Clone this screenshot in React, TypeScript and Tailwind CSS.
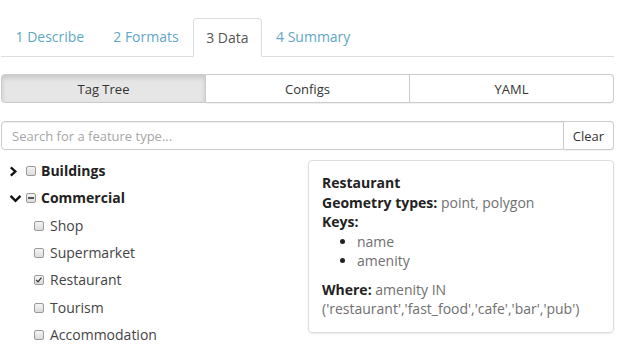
import React from "react";

function Check({ state }: { state: "off" | "on" | "mixed" }) {
  return (
    <span className="relative inline-flex w-[10px] h-[10px] shrink-0 rounded-[2px] border border-[#9a9a9a] bg-gradient-to-b from-[#f4f4f4] to-[#dcdcdc]">
      {state === "on" && (
        <svg viewBox="0 0 10 10" className="absolute left-[0px] top-[0px] w-[8px] h-[8px]">
          <path d="M1.5 5 L3.8 7.3 L8 2" fill="none" stroke="#333" strokeWidth="1.6" />
        </svg>
      )}
      {state === "mixed" && (
        <span className="absolute left-[1px] right-[1px] top-[3px] h-[2px] bg-[#555]" />
      )}
    </span>
  );
}

function ChevronRight() {
  return (
    <svg viewBox="0 0 10 12" className="w-[9px] h-[11px]">
      <path d="M2 1.5 L7 6 L2 10.5" fill="none" stroke="#111" strokeWidth="2.6" />
    </svg>
  );
}

function ChevronDown() {
  return (
    <svg viewBox="0 0 14 10" className="w-[13px] h-[9px]">
      <path d="M1.5 2 L7 7.5 L12.5 2" fill="none" stroke="#111" strokeWidth="2.6" />
    </svg>
  );
}

export default function App() {
  const font = { fontFamily: '"Open Sans", "Liberation Sans", sans-serif' };
  const tabs = ["1 Describe", "2 Formats", "3 Data", "4 Summary"];
  const children: [string, "off" | "on"][] = [
    ["Shop", "off"],
    ["Supermarket", "off"],
    ["Restaurant", "on"],
    ["Tourism", "off"],
    ["Accommodation", "off"],
  ];
  return (
    <div className="w-[624px] h-[354px] bg-white text-[#333] text-[14px] leading-[20px] overflow-hidden" style={font}>
      <div className="w-[613px] ml-[1px] pt-[18px]">
        {/* Tabs */}
        <div className="flex border-b border-[#ddd] h-[39px]">
          {tabs.map((t, i) => (
            <div
              key={t}
              className={
                i === 2
                  ? "h-[39px] -mb-[1px] px-[12px] flex items-center rounded-t-[4px] border border-[#ddd] border-b-white bg-white text-[#555] text-[14px]"
                  : "h-[38px] px-[13.5px] flex items-center text-[#5fa7c6] text-[14px] border border-transparent"
              }
            >
              {t}
            </div>
          ))}
        </div>

        {/* Segmented */}
        <div className="mt-[17px] flex h-[29px] text-[13px]">
          <div className="flex-1 flex items-center justify-center rounded-l-[4px] border border-[#ccc] bg-[#e6e6e6] shadow-[inset_0_3px_5px_rgba(0,0,0,0.125)] text-[#333]">
            Tag Tree
          </div>
          <div className="flex-1 flex items-center justify-center border border-l-0 border-[#ccc] bg-white text-[#333] shadow-[0_1px_1px_rgba(0,0,0,0.06)]">
            Configs
          </div>
          <div className="flex-1 flex items-center justify-center rounded-r-[4px] border border-l-0 border-[#ccc] bg-white text-[#333] shadow-[0_1px_1px_rgba(0,0,0,0.06)]">
            YAML
          </div>
        </div>

        {/* Search */}
        <div className="mt-[18px] flex h-[29px] text-[13px]">
          <div className="flex-1 flex items-center px-[10px] rounded-l-[4px] border border-[#ccc] shadow-[inset_0_1px_1px_rgba(0,0,0,0.075)] text-[#a6a6a6]">
            Search for a feature type...
          </div>
          <div className="w-[50px] flex items-center justify-center rounded-r-[4px] border border-l-0 border-[#ccc] bg-white text-[#333] shadow-[0_1px_1px_rgba(0,0,0,0.06)]">
            Clear
          </div>
        </div>

        {/* Body */}
        <div className="mt-[10px] flex">
          <div className="w-[307px] pt-[1px]">
            <div className="flex items-center h-[20px] pl-[8px]">
              <ChevronRight />
              <span className="ml-[8px]"><Check state="off" /></span>
              <span className="ml-[5px] font-bold text-[14px] text-[#222]">Buildings</span>
            </div>
            <div className="flex items-center h-[20px] pl-[8px] mt-[7.3px]">
              <ChevronDown />
              <span className="ml-[4px]"><Check state="mixed" /></span>
              <span className="ml-[5px] font-bold text-[14px] text-[#222]">Commercial</span>
            </div>
            {children.map(([c, s]) => (
              <div key={c} className="flex items-center h-[20px] pl-[33px] mt-[7.4px]">
                <Check state={s} />
                <span className="ml-[6px] text-[14px] text-[#444]">{c}</span>
              </div>
            ))}
          </div>
          <div className="w-[306px] h-[173px] rounded-[4px] border border-[#ddd] shadow-[0_1px_2px_rgba(0,0,0,0.08)] px-[13px] pt-[12px] text-[14px] leading-[19.5px]">
            <div className="font-bold text-[#222]">Restaurant</div>
            <div>
              <span className="font-bold text-[#222]">Geometry types:</span>{" "}
              <span className="text-[#707070]">point, polygon</span>
            </div>
            <div className="font-bold text-[#222]">Keys:</div>
            <ul className="list-disc pl-[35px] mb-[9px] text-[#707070] marker:text-[#222]">
              <li>name</li>
              <li>amenity</li>
            </ul>
            <div>
              <span className="font-bold text-[#222]">Where:</span>{" "}
              <span className="text-[#707070]">amenity IN</span>
            </div>
            <div className="text-[#707070]">('restaurant','fast_food','cafe','bar','pub')</div>
          </div>
        </div>
      </div>
    </div>
  );
}
